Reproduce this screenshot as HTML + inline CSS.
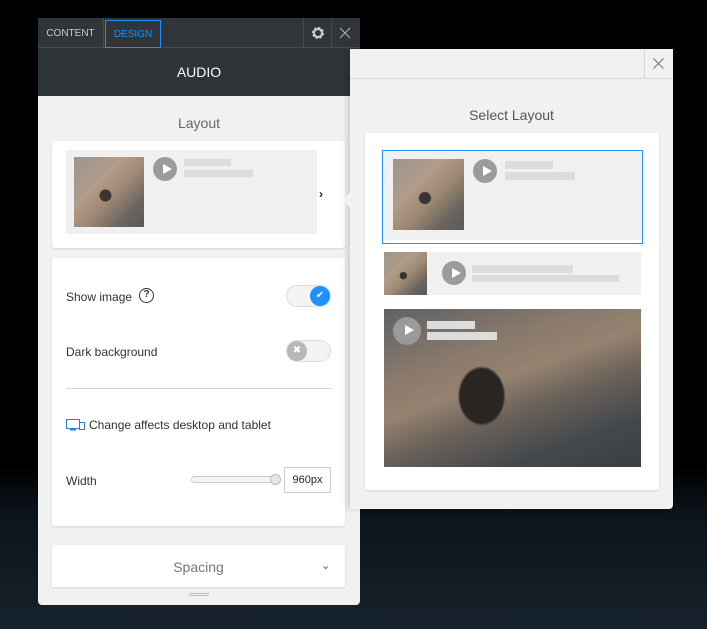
<!DOCTYPE html>
<html><head><style>
*{margin:0;padding:0;box-sizing:border-box}
body{width:707px;height:629px;overflow:hidden;position:relative;font-family:"Liberation Sans",sans-serif;background:linear-gradient(180deg,#000 0%,#000 74%,#0c141b 82%,#16222c 100%)}
.a{position:absolute}
.img{background:radial-gradient(circle at 45% 55%,#3a3430 0 10%,transparent 12%),linear-gradient(135deg,#9a9590 0%,#b09c88 35%,#a08a74 55%,#6a6560 80%,#5a5a5a 100%)}
.bigimg{background:radial-gradient(ellipse 24px 30px at 38% 55%,#2a2624 0 90%,transparent 100%),linear-gradient(160deg,#5e6266 0%,#8a7a6c 30%,#958270 45%,#6b625a 60%,#45494d 80%,#3a3e42 100%)}
.play{position:absolute;border-radius:50%;background:#9b9b9b}
.play:after{content:"";position:absolute;left:42%;top:30%;border-left:9px solid #fff;border-top:5.5px solid transparent;border-bottom:5.5px solid transparent}
.bar{position:absolute;background:#dcdcdc}
.card{position:absolute;background:#fff;border-radius:3px;box-shadow:0 1px 2px rgba(0,0,0,.12)}
.lbl{position:absolute;font-size:12px;color:#333}
</style></head><body>
<div class="a" style="left:38px;top:18px;width:322px;height:587px;background:#f1f1f1;border-radius:0 0 4px 4px;overflow:hidden">
 <div class="a" style="left:0;top:0;width:322px;height:30px;background:#2f3538;border-bottom:1px solid #454c50"></div>
 <div class="a" style="left:0;top:0;width:66px;height:30px;border-right:1px solid #454c50;color:#c8cccf;font-size:10px;line-height:32px;text-align:center">CONTENT</div>
 <div class="a" style="left:67px;top:2px;width:56px;height:28px;border:1px solid #1e90ff;color:#1e90ff;font-size:10px;line-height:28px;text-align:center">DESIGN</div>
 <div class="a" style="left:265px;top:0;width:29px;height:30px;border-left:1px solid #454c50;border-right:1px solid #454c50"></div>
 <svg class="a" style="left:273px;top:8px" width="14" height="14" viewBox="0 0 14 14"><circle cx="7" cy="7" r="4.5" fill="none" stroke="#ccc" stroke-width="3" stroke-dasharray="2.2 1.3"/><circle cx="7" cy="7" r="4" fill="none" stroke="#ccc" stroke-width="2"/></svg>
 <svg class="a" style="left:301px;top:9px" width="12" height="12"><path d="M1 1L11 11M11 1L1 11" stroke="#aaa" stroke-width="1.2"/></svg>
 <div class="a" style="left:0;top:30px;width:322px;height:48px;background:#2e3438;color:#fff;font-size:14px;line-height:48px;text-align:center">AUDIO</div>
 <div class="a" style="left:0;top:97px;width:322px;text-align:center;font-size:14px;color:#666">Layout</div>
</div>
<div class="card" style="left:52px;top:141px;width:293px;height:107px"></div>
<div class="a" style="left:66px;top:150px;width:251px;height:84px;background:#f0f0f0"></div>
<div class="a img" style="left:74px;top:157px;width:70px;height:70px"></div>
<div class="play" style="left:153px;top:157px;width:24px;height:24px"></div>
<div class="bar" style="left:184px;top:159px;width:47px;height:7px"></div>
<div class="bar" style="left:184px;top:170px;width:69px;height:7px"></div>
<div class="a" style="left:319px;top:187px;font-size:12px;font-weight:bold;color:#222">›</div>

<div class="card" style="left:52px;top:258px;width:293px;height:268px"></div>
<div class="lbl" style="left:66px;top:290px">Show image</div>
<div class="a" style="left:139px;top:288px;width:15px;height:15px;border:1.5px solid #333;border-radius:50%;font-size:10px;font-weight:bold;text-align:center;line-height:12px;color:#333">?</div>
<div class="a" style="left:286px;top:285px;width:45px;height:22px;border-radius:11px;background:#f3f3f3;border:1px solid #ddd"></div>
<div class="a" style="left:310px;top:286px;width:20px;height:20px;border-radius:50%;background:#1e90ff;color:#fff;font-size:10px;text-align:center;line-height:20px">✔</div>
<div class="lbl" style="left:66px;top:345px">Dark background</div>
<div class="a" style="left:286px;top:340px;width:45px;height:22px;border-radius:11px;background:#f3f3f3;border:1px solid #ddd"></div>
<div class="a" style="left:287px;top:341px;width:20px;height:20px;border-radius:50%;background:#b5b8ba;color:#fff;font-size:10px;text-align:center;line-height:20px">✖</div>
<div class="a" style="left:66px;top:388px;width:265px;height:1px;background:#cfd6dc"></div>
<svg class="a" style="left:66px;top:419px" width="19" height="12"><rect x="0.5" y="0.5" width="13" height="9" fill="none" stroke="#2a7fd4"/><rect x="4" y="10" width="6" height="1.5" fill="#2a7fd4"/><rect x="13.5" y="3.5" width="5" height="7" fill="#fff" stroke="#2a7fd4"/></svg>
<div class="lbl" style="left:89px;top:418px">Change affects desktop and tablet</div>
<div class="lbl" style="left:66px;top:474px">Width</div>
<div class="a" style="left:191px;top:476px;width:87px;height:7px;border-radius:4px;background:#f4f4f4;border:1px solid #ccc"></div>
<div class="a" style="left:270px;top:474px;width:11px;height:11px;border-radius:50%;background:#e8e8e8;border:1px solid #bbb"></div>
<div class="a" style="left:284px;top:467px;width:47px;height:26px;border:1px solid #ccc;background:#fff;font-size:11px;text-align:center;line-height:24px;color:#222">960px</div>
<div class="card" style="left:52px;top:545px;width:293px;height:42px;border-radius:3px 3px 0 0"></div>
<div class="a" style="left:52px;top:559px;width:293px;text-align:center;font-size:14px;color:#777">Spacing</div>
<div class="a" style="left:321px;top:559px;font-size:11px;color:#555">⌄</div>
<div class="a" style="left:189px;top:593px;width:20px;height:1px;background:#bbb;box-shadow:0 2px 0 #bbb"></div>

<div class="a" style="left:350px;top:49px;width:323px;height:460px;background:#f1f1f1;border-radius:0 0 4px 0;box-shadow:-3px 0 6px rgba(0,0,0,.15)"></div>
<div class="a" style="left:342px;top:192px;width:0;height:0;border-top:8px solid transparent;border-bottom:8px solid transparent;border-right:9px solid #f1f1f1"></div>
<div class="a" style="left:350px;top:78px;width:323px;height:1px;background:#cfd6dc"></div>
<div class="a" style="left:644px;top:49px;width:1px;height:29px;background:#cfd6dc"></div>
<svg class="a" style="left:653px;top:58px" width="11" height="11"><path d="M0.5 0.5L10.5 10.5M10.5 0.5L0.5 10.5" stroke="#777" stroke-width="1.1"/></svg>
<div class="a" style="left:350px;top:107px;width:323px;text-align:center;font-size:14px;color:#555">Select Layout</div>
<div class="card" style="left:365px;top:133px;width:294px;height:357px"></div>
<div class="a" style="left:382px;top:150px;width:261px;height:94px;border:1px solid #1e90ff;background:#fff"></div>
<div class="a" style="left:384px;top:152px;width:257px;height:88px;background:#f0f0f0"></div>
<div class="a img" style="left:393px;top:159px;width:71px;height:71px"></div>
<div class="play" style="left:473px;top:159px;width:24px;height:24px"></div>
<div class="bar" style="left:505px;top:161px;width:48px;height:8px"></div>
<div class="bar" style="left:505px;top:172px;width:70px;height:8px"></div>
<div class="a" style="left:384px;top:252px;width:257px;height:43px;background:#f0f0f0"></div>
<div class="a img" style="left:384px;top:252px;width:43px;height:43px"></div>
<div class="play" style="left:442px;top:261px;width:24px;height:24px"></div>
<div class="bar" style="left:472px;top:265px;width:101px;height:8px"></div>
<div class="bar" style="left:472px;top:275px;width:147px;height:7px"></div>
<div class="a bigimg" style="left:384px;top:309px;width:257px;height:158px"></div>
<div class="play" style="left:393px;top:317px;width:28px;height:28px;background:#9a9a9a"></div>
<div class="bar" style="left:427px;top:321px;width:48px;height:8px"></div>
<div class="bar" style="left:427px;top:332px;width:70px;height:8px"></div>
</body></html>
